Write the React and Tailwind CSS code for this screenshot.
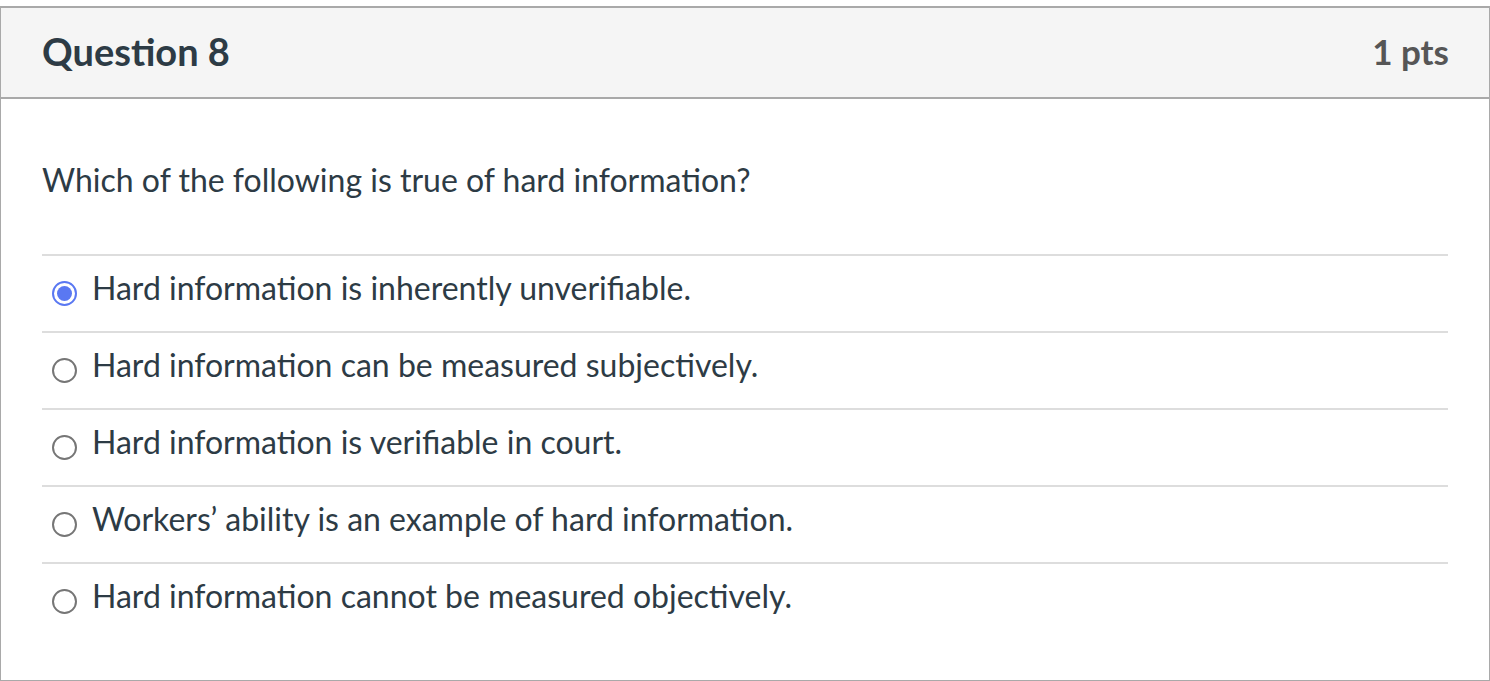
import React from "react";

const answers = [
  { text: "Hard information is inherently unverifiable.", checked: true },
  { text: "Hard information can be measured subjectively.", checked: false },
  { text: "Hard information is verifiable in court.", checked: false },
  { text: "Workers\u2019 ability is an example of hard information.", checked: false },
  { text: "Hard information cannot be measured objectively.", checked: false },
];

const Radio = ({ checked }) =>
  checked ? (
    <span className="w-[25px] h-[25px] rounded-full border-2 border-[#5a78f2] bg-white flex items-center justify-center shrink-0">
      <span className="w-[15px] h-[15px] rounded-full bg-[#5a78f2]" />
    </span>
  ) : (
    <span className="w-[25px] h-[25px] rounded-full border-2 border-[#767676] bg-white shrink-0" />
  );

const App = () => {
  return (
    <div className="w-[1490px] h-[681px] bg-white pt-[6px] font-['Lato','Liberation_Sans',sans-serif] text-[#2d3b45]">
      <div className="h-[675px] border border-t-2 border-[#a9a9a9] flex flex-col">
        <div className="h-[91px] bg-[#f5f5f5] border-b-2 border-[#a9a9a9] flex items-center justify-between pl-[41px] pr-[40px] shrink-0">
          <h2 className="text-[38px] font-bold leading-none mb-[4px]">Question 8</h2>
          <span className="text-[35px] font-bold text-[#565656] leading-none mb-[2px]">1 pts</span>
        </div>
        <div className="px-[41px]">
          <p className="text-[32px] leading-[45px] mt-[58px] mb-[52px]">
            Which of the following is true of hard information?
          </p>
          <div>
            {answers.map((a, i) => (
              <div
                key={i}
                className="h-[77px] border-t-2 border-[#dddddd] flex items-center pl-[10px] gap-[15px]"
              >
                <Radio checked={a.checked} />
                <span className="text-[32px] leading-none mb-[12px]">{a.text}</span>
              </div>
            ))}
          </div>
        </div>
      </div>
    </div>
  );
};

export default App;
